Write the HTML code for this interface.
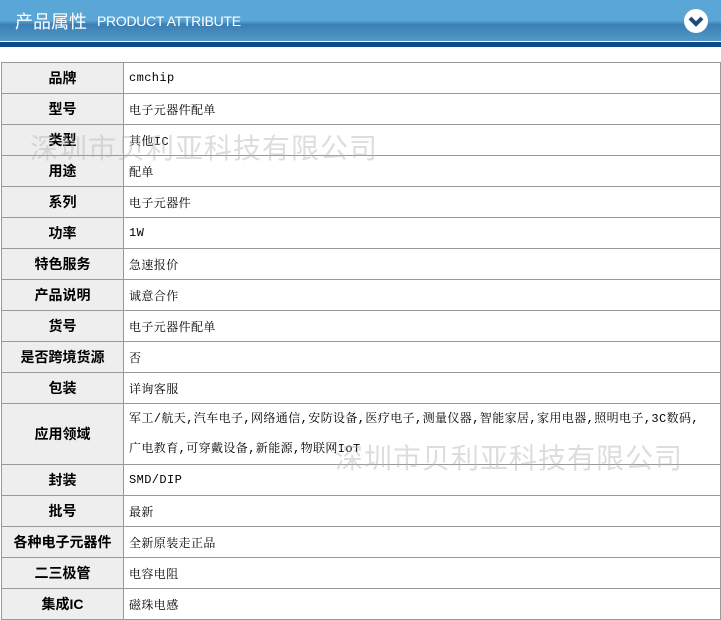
<!DOCTYPE html>
<html><head><meta charset="utf-8"><style>
body{margin:0;width:721px;height:617px;overflow:hidden;background:#fff;position:relative;font-family:"Liberation Sans","Noto Sans CJK SC",sans-serif}
.hd{position:absolute;left:0;top:0;width:721px;height:41px;background:linear-gradient(#5aa6d6 0%,#5aa6d6 50%,#3a7fb4 60%,#5598c8 100%)}
.hd .t{position:absolute;left:15px;top:8px;color:#fff;font-size:18px}
.hd .e{position:absolute;left:97px;top:13px;color:#fff;font-size:14px;letter-spacing:-0.3px}
.bar{position:absolute;left:0;top:42px;width:721px;height:5px;background:#0d4a8a}
.ic{position:absolute;left:684px;top:9px;width:24px;height:24px;border-radius:50%;background:#fff}
table{position:absolute;left:1px;top:62px;border-collapse:collapse;width:720px}
td{border:1px solid #999;height:30px;padding:0;font-size:12px;color:#000}
td.l{width:121px;background:#eee;text-align:center;font-weight:bold;font-size:14px;font-family:"Liberation Sans","Noto Sans CJK SC",sans-serif}
td.v{padding-left:5px;font-family:"Liberation Mono","Noto Serif CJK SC",monospace;letter-spacing:0.4px}
.wm{position:absolute;color:rgba(180,180,180,.45);font-size:28px;letter-spacing:1px;font-family:"Liberation Sans","Noto Sans CJK SC",sans-serif;z-index:2}
</style></head><body>
<div class="hd"><span class="t">产品属性</span><span class="e">PRODUCT ATTRIBUTE</span>
<div class="ic"><svg width="24" height="24"><path d="M6 9 L12 15 L18 9" stroke="#1a4a80" stroke-width="4" fill="none"/></svg></div></div>
<div class="bar"></div>
<table>
<tr><td class="l">品牌</td><td class="v">cmchip</td></tr>
<tr><td class="l">型号</td><td class="v">电子元器件配单</td></tr>
<tr><td class="l">类型</td><td class="v">其他IC</td></tr>
<tr><td class="l">用途</td><td class="v">配单</td></tr>
<tr><td class="l">系列</td><td class="v">电子元器件</td></tr>
<tr><td class="l">功率</td><td class="v">1W</td></tr>
<tr><td class="l">特色服务</td><td class="v">急速报价</td></tr>
<tr><td class="l">产品说明</td><td class="v">诚意合作</td></tr>
<tr><td class="l">货号</td><td class="v">电子元器件配单</td></tr>
<tr><td class="l">是否跨境货源</td><td class="v">否</td></tr>
<tr><td class="l">包装</td><td class="v">详询客服</td></tr>
<tr><td class="l" style="height:60px">应用领域</td><td class="v" style="line-height:30px">军工/航天,汽车电子,网络通信,安防设备,医疗电子,测量仪器,智能家居,家用电器,照明电子,3C数码,<br>广电教育,可穿戴设备,新能源,物联网IoT</td></tr>
<tr><td class="l">封装</td><td class="v">SMD/DIP</td></tr>
<tr><td class="l">批号</td><td class="v">最新</td></tr>
<tr><td class="l">各种电子元器件</td><td class="v">全新原装走正品</td></tr>
<tr><td class="l">二三极管</td><td class="v">电容电阻</td></tr>
<tr><td class="l">集成IC</td><td class="v">磁珠电感</td></tr>
</table>
<div class="wm" style="left:30px;top:127px">深圳市贝利亚科技有限公司</div>
<div class="wm" style="left:335px;top:437px">深圳市贝利亚科技有限公司</div>
</body></html>
